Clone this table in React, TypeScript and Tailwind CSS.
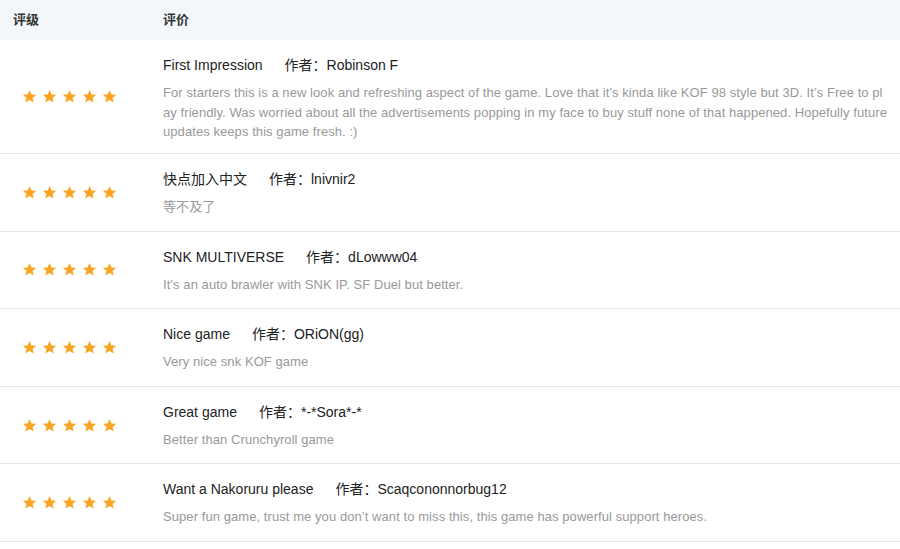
import React from 'react';

type Review = {
  title: string;
  author: string;
  body: string;
  stars: number;
};

const reviews: Review[] = [
  {
    title: 'First Impression',
    author: 'Robinson F',
    body:
      'For starters this is a new look and refreshing aspect of the game. Love that it’s kinda like KOF 98 style but 3D. It’s Free to play friendly. Was worried about all the advertisements popping in my face to buy stuff none of that happened. Hopefully future updates keeps this game fresh. :)',
    stars: 5,
  },
  { title: '快点加入中文', author: 'lnivnir2', body: '等不及了', stars: 5 },
  {
    title: 'SNK MULTIVERSE',
    author: 'dLowww04',
    body: 'It’s an auto brawler with SNK IP. SF Duel but better.',
    stars: 5,
  },
  { title: 'Nice game', author: 'ORiON(gg)', body: 'Very nice snk KOF game', stars: 5 },
  { title: 'Great game', author: '*-*Sora*-*', body: 'Better than Crunchyroll game', stars: 5 },
  {
    title: 'Want a Nakoruru please',
    author: 'Scaqcononnorbug12',
    body: 'Super fun game, trust me you don’t want to miss this, this game has powerful support heroes.',
    stars: 5,
  },
];

function Star() {
  return (
    <svg viewBox="0 0 24 24" className="h-[15px] w-[15px]" fill="#f8a523">
      <path d="M12 1.5l3.1 7.1 7.6.6-5.8 5 1.8 7.5L12 17.7l-6.7 4 1.8-7.5-5.8-5 7.6-.6z" />
    </svg>
  );
}

function Stars({ count }: { count: number }) {
  return (
    <div className="flex items-center gap-[5px]">
      {Array.from({ length: count }).map((_, i) => (
        <Star key={i} />
      ))}
    </div>
  );
}

export default function App() {
  return (
    <div
      className="min-h-screen w-[900px] bg-white text-[#333]"
      style={{ fontFamily: '"Liberation Sans", Arial, "Noto Sans CJK SC", sans-serif' }}
    >
      {/* table header */}
      <div className="flex h-10 items-center bg-[#f3f7fa] text-[13px] font-bold text-[#333]">
        <div className="w-[163px] pl-[13px]">评级</div>
        <div>评价</div>
      </div>

      {reviews.map((r, i) => (
        <div key={i} className="flex min-h-[77.6px] border-b border-[#e6e6e6]">
          <div className="flex w-[163px] shrink-0 items-center pl-[22px]">
            <Stars count={r.stars} />
          </div>
          <div className="min-w-0 flex-1 pb-[11.5px] pr-[12px] pt-[15px]">
            <div className="text-[14px] leading-5 text-[#222]">
              {r.title}
              <span className="ml-[22px]">作者：{r.author}</span>
            </div>
            <p className="mt-[8px] break-all text-[13px] leading-[19.5px] tracking-[0.07px] text-[#999]">
              {r.body}
            </p>
          </div>
        </div>
      ))}
    </div>
  );
}
